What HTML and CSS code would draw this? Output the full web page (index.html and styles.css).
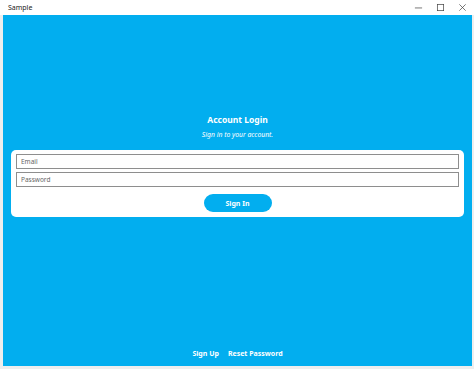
FILE: index.html
```html
<!DOCTYPE html>
<html lang="en">
<head>
    <meta charset="UTF-8">
    <title>Sample</title>
    <link rel="stylesheet" href="styles.css">
</head>
<body>
    <div class="window">
        <div class="titlebar">
            <span class="title">Sample</span>
            <div class="controls">
                <svg width="9" height="9" viewBox="0 0 10 10"><path d="M1 5.5h8" stroke="#444" stroke-width="0.8"/></svg>
                <svg width="9" height="9" viewBox="0 0 10 10"><rect x="1.5" y="1.5" width="7" height="7" fill="none" stroke="#444" stroke-width="0.8"/></svg>
                <svg width="9" height="9" viewBox="0 0 10 10"><path d="M1.5 1.5l7 7M8.5 1.5l-7 7" stroke="#444" stroke-width="0.8"/></svg>
            </div>
        </div>
        <div class="main">
            <div class="heading">Account Login</div>
            <div class="subheading">Sign in to your account.</div>
            <form class="card">
                <input type="email" class="field" placeholder="Email">
                <input type="password" class="field" placeholder="Password">
                <button type="submit" class="btn">Sign In</button>
            </form>
            <div class="footer">
                <a href="#">Sign Up</a>
                <a href="#">Reset Password</a>
            </div>
        </div>
    </div>
</body>
</html>
```

FILE: styles.css
```css
body {
    margin: 0;
    background-color: #eeeeee;
    font-family: 'Noto Sans', 'Open Sans', sans-serif;
}

.window {
    height: 369px;
    display: flex;
    flex-direction: column;
}

.titlebar {
    height: 15px;
    background-color: #ffffff;
    display: flex;
    align-items: center;
    justify-content: space-between;
    padding: 0 8px 0 8px;
}
.title {
    font-size: 7px;
    color: #222;
}
.controls {
    display: flex;
    gap: 13px;
    margin-right: -1px;
}

.main {
    flex: 1;
    margin: 0 2px 3px 3px;
    background-color: #02aeef;
    display: flex;
    flex-direction: column;
    align-items: center;
    padding-top: 99px;
}
.heading {
    color: #ffffff;
    font-weight: 700;
    font-size: 8.5px;
    line-height: 12px;
}
.subheading {
    color: #ffffff;
    font-style: italic;
    font-size: 6.8px;
    margin-top: 4px;
    line-height: 10px;
}

.card {
    align-self: stretch;
    margin: 10px 8px 0 8px;
    background-color: #ffffff;
    border-radius: 5px;
    padding: 4px 5px 5px 5px;
    display: flex;
    flex-direction: column;
    align-items: center;
    gap: 3px;
}
.field {
    box-sizing: border-box;
    width: 100%;
    height: 15px;
    border: 1px solid #8e8e8e;
    border-radius: 0;
    padding: 0 4px;
    font-family: 'Noto Sans', 'Open Sans', sans-serif;
    font-size: 6.5px;
    outline: none;
}
.field::placeholder {
    color: #666;
}
.btn {
    margin-top: 4px;
    width: 68px;
    height: 18px;
    border: none;
    border-radius: 9px;
    background-color: #02aeef;
    color: #ffffff;
    font-family: 'Noto Sans', 'Open Sans', sans-serif;
    font-weight: 700;
    font-size: 7px;
    cursor: pointer;
}

.footer {
    margin-top: auto;
    margin-bottom: 8px;
    display: flex;
    gap: 9px;
}
.footer a {
    color: #ffffff;
    font-weight: 700;
    font-size: 7px;
    text-decoration: none;
}
```
